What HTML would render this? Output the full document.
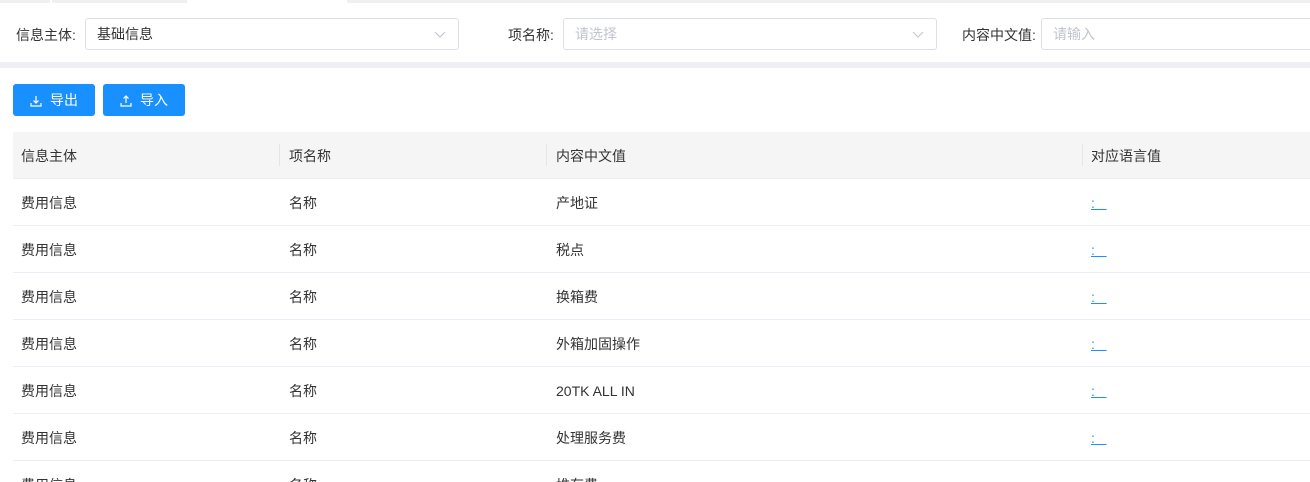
<!DOCTYPE html>
<html><head><meta charset="utf-8"><style>
*{box-sizing:border-box;margin:0;padding:0}
html,body{width:1310px;height:482px;overflow:hidden}
body{background:#fff;font-family:"Liberation Sans","Noto Sans CJK SC",sans-serif;font-size:14px;color:#333;position:relative}
.abs{position:absolute}
.lbl{position:absolute;top:25px;font-size:14px;color:#333}
.inp{position:absolute;top:18px;height:32px;border:1px solid #dcdfe6;border-radius:3px;padding-left:11px;line-height:30px;font-size:14px}
.ph{color:#c0c4cc}
.arr{position:absolute;right:12px;top:9px}
.btn{position:absolute;top:84px;height:32px;background:#1890ff;border-radius:3px;color:#fff;font-size:14px;line-height:32px;width:82px;text-align:center}
.btn svg{vertical-align:-2px;margin-right:8px}
.row{position:absolute;left:13px;width:1297px;height:47px;border-bottom:1px solid #ebeef5}
.row div{position:absolute;top:1px;line-height:46px;font-size:14px;color:#333}
.hd{background:#f5f5f5}
.sep{position:absolute;top:12px;width:1px;height:22px;background:#e5e5e5}
a{color:#1890ff;text-decoration:underline}
</style></head><body>
<div class="abs" style="left:0;top:0;width:1310px;height:3px;background:#f0f0f2"></div>
<div class="abs" style="left:187px;top:0;width:160px;height:3px;background:#fff"></div>
<div class="abs" style="left:50px;top:0;width:2px;height:3px;background:#fff"></div>
<div class="lbl" style="left:16px">信息主体:</div>
<div class="inp" style="left:85px;width:374px">基础信息<svg class="arr" width="12" height="12" viewBox="0 0 12 12"><path d="M1 4l5 5 5-5" fill="none" stroke="#c0c4cc" stroke-width="1"/></svg></div>
<div class="lbl" style="left:508px">项名称:</div>
<div class="inp ph" style="left:563px;width:374px">请选择<svg class="arr" width="12" height="12" viewBox="0 0 12 12"><path d="M1 4l5 5 5-5" fill="none" stroke="#c0c4cc" stroke-width="1"/></svg></div>
<div class="lbl" style="left:962px">内容中文值:</div>
<div class="inp ph" style="left:1041px;width:280px">请输入</div>
<div class="abs" style="left:0;top:62px;width:1310px;height:6px;background:#f0f0f4"></div>
<div class="btn" style="left:13px"><svg width="12" height="12" viewBox="0 0 12 12"><path d="M6 1v7M3.5 5.5L6 8l2.5-2.5M1 8v3h10V8" fill="none" stroke="#fff" stroke-width="1.2"/></svg>导出</div>
<div class="btn" style="left:103px"><svg width="12" height="12" viewBox="0 0 12 12"><path d="M6 8V1M3.5 3.5L6 1l2.5 2.5M1 8v3h10V8" fill="none" stroke="#fff" stroke-width="1.2"/></svg>导入</div>
<div class="row hd" style="top:132px"><div style="left:8px">信息主体</div><span class="sep" style="left:266px"></span><div style="left:276px">项名称</div><span class="sep" style="left:533px"></span><div style="left:543px">内容中文值</div><span class="sep" style="left:1069px"></span><div style="left:1078px">对应语言值</div></div>
<div class="row" style="top:179px"><div style="left:8px">费用信息</div><div style="left:276px">名称</div><div style="left:543px">产地证</div><div style="left:1078px"><a>:&nbsp;&nbsp;&nbsp;</a></div></div>
<div class="row" style="top:226px"><div style="left:8px">费用信息</div><div style="left:276px">名称</div><div style="left:543px">税点</div><div style="left:1078px"><a>:&nbsp;&nbsp;&nbsp;</a></div></div>
<div class="row" style="top:273px"><div style="left:8px">费用信息</div><div style="left:276px">名称</div><div style="left:543px">换箱费</div><div style="left:1078px"><a>:&nbsp;&nbsp;&nbsp;</a></div></div>
<div class="row" style="top:320px"><div style="left:8px">费用信息</div><div style="left:276px">名称</div><div style="left:543px">外箱加固操作</div><div style="left:1078px"><a>:&nbsp;&nbsp;&nbsp;</a></div></div>
<div class="row" style="top:367px"><div style="left:8px">费用信息</div><div style="left:276px">名称</div><div style="left:543px">20TK ALL IN</div><div style="left:1078px"><a>:&nbsp;&nbsp;&nbsp;</a></div></div>
<div class="row" style="top:414px"><div style="left:8px">费用信息</div><div style="left:276px">名称</div><div style="left:543px">处理服务费</div><div style="left:1078px"><a>:&nbsp;&nbsp;&nbsp;</a></div></div>
<div class="row" style="top:461px"><div style="left:8px">费用信息</div><div style="left:276px">名称</div><div style="left:543px">堆存费</div><div style="left:1078px"><a>:&nbsp;&nbsp;&nbsp;</a></div></div>
</body></html>
